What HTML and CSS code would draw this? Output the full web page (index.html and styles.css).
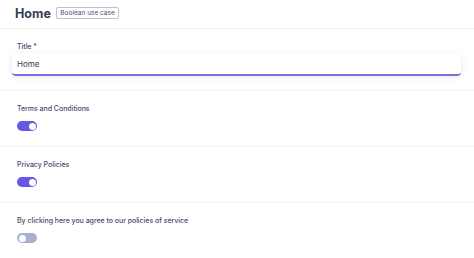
FILE: index.html
```html
<!DOCTYPE html>
<html>
<head>
<meta charset="utf-8">
<link rel="stylesheet" href="styles.css">
</head>
<body>
<header class="header">
  <h1 class="title">Home</h1>
  <span class="badge">Boolean use case</span>
</header>
<section class="section section-input">
  <label class="label">Title *</label>
  <div class="input">Home</div>
</section>
<section class="section">
  <label class="label">Terms and Conditions</label>
  <span class="toggle on"><span class="knob"></span></span>
</section>
<section class="section">
  <label class="label">Privacy Policies</label>
  <span class="toggle on"><span class="knob"></span></span>
</section>
<section class="section last">
  <label class="label">By clicking here you agree to our policies of service</label>
  <span class="toggle off"><span class="knob"></span></span>
</section>
</body>
</html>
```
FILE: styles.css
```css
* { box-sizing: border-box; }
body {
  margin: 0;
  background: #fff;
  font-family: Inter, "Noto Sans", sans-serif;
  color: #4a4a6a;
}
.header {
  height: 29px;
  display: flex;
  align-items: center;
  gap: 5px;
  padding: 0 15px 2px;
  border-bottom: 1px solid #f3f3f6;
}
.title {
  margin: 0;
  font-size: 12.5px;
  font-weight: 700;
  color: #3b3b52;
}
.badge {
  font-size: 6.5px;
  color: #4a4a6a;
  border: 1px solid #c0c0cf;
  border-radius: 2px;
  padding: 1px 3.5px;
  line-height: 8px;
}
.section {
  display: flex;
  flex-direction: column;
  align-items: flex-start;
  padding: 13px 17px 0;
  height: 56px;
  border-bottom: 1px solid #f3f3f6;
}
.section-input {
  height: 62px;
  padding: 13px 13px 0 12px;
  align-items: stretch;
}
.section-input .label { margin-left: 5px; margin-bottom: 2px; }
.label {
  font-size: 7px;
  font-weight: 500;
  color: #4a4a6a;
  line-height: 9px;
  margin-bottom: 8px;
  letter-spacing: -0.03px;
}
.input {
  height: 23px;
  display: flex;
  align-items: center;
  padding: 0 5px;
  font-size: 8px;
  color: #3b3b52;
  background: #fff;
  border-radius: 4px;
  border-bottom: 2px solid #7b6fe0;
  box-shadow: 0 1px 6px rgba(33, 33, 52, 0.1);
}
.toggle {
  width: 20px;
  height: 10px;
  border-radius: 5px;
  display: flex;
  align-items: center;
  padding: 0 1.5px;
}
.toggle.on { background: #6657e6; justify-content: flex-end; }
.toggle.off { background: #a9b0cb; justify-content: flex-start; }
.knob {
  width: 7px;
  height: 7px;
  border-radius: 50%;
  background: #fff;
}
.last { border-bottom: none; }
```
